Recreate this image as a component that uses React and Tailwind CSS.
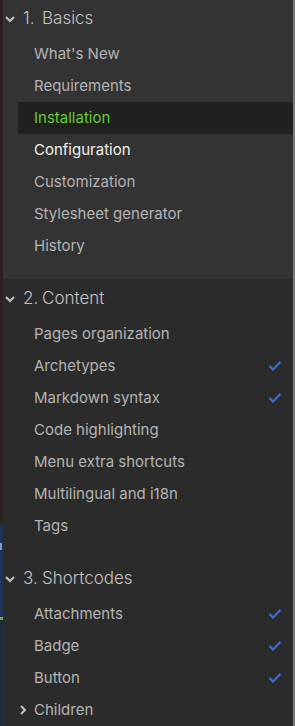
import React from 'react';

const sections = [
  {
    num: '1.',
    title: 'Basics',
    bg: 'bg-[#333333]',
    items: [
      { label: "What's New" },
      { label: 'Requirements' },
      { label: 'Installation', active: true },
      { label: 'Configuration', parent: true },
      { label: 'Customization' },
      { label: 'Stylesheet generator' },
      { label: 'History' },
    ],
  },
  {
    num: '2.',
    title: 'Content',
    bg: 'bg-[#2b2b2b]',
    items: [
      { label: 'Pages organization' },
      { label: 'Archetypes', visited: true },
      { label: 'Markdown syntax', visited: true },
      { label: 'Code highlighting' },
      { label: 'Menu extra shortcuts' },
      { label: 'Multilingual and i18n' },
      { label: 'Tags' },
    ],
  },
  {
    num: '3.',
    title: 'Shortcodes',
    bg: 'bg-[#2b2b2b]',
    items: [
      { label: 'Attachments', visited: true },
      { label: 'Badge', visited: true },
      { label: 'Button', visited: true },
      { label: 'Children', collapsed: true },
    ],
  },
];

const ChevronDown = () => (
  <svg width="10" height="10" viewBox="0 0 10 10" className="text-[#c4c4c4]">
    <path d="M1 3 L5 7 L9 3" fill="none" stroke="currentColor" strokeWidth="2" />
  </svg>
);

const ChevronRight = () => (
  <svg width="10" height="10" viewBox="0 0 10 10" className="text-[#c4c4c4]">
    <path d="M3 1 L7 5 L3 9" fill="none" stroke="currentColor" strokeWidth="2" />
  </svg>
);

const Check = () => (
  <svg width="14" height="12" viewBox="0 0 14 12" className="text-[#3d6fd1]">
    <path d="M1.5 6 L5 9.5 L12.5 2" fill="none" stroke="currentColor" strokeWidth="2.2" />
  </svg>
);

function Section({ section }) {
  return (
    <div className={`${section.bg} pb-[17px]`}>
      <div className="h-[39px] flex items-center pl-[2px] text-[17px] text-[#c4c4c4] font-light">
        <ChevronDown />
        <span className="ml-[8px] w-[19px]">{section.num}</span>
        <span>{section.title}</span>
      </div>
      <ul>
        {section.items.map((item) => (
          <li
            key={item.label}
            className={`h-[32px] ml-[15px] flex items-center pr-[11px] text-[15px] ${
              item.active
                ? 'bg-[#202020] text-[#62cc32]'
                : item.parent
                ? 'text-[#f2f2f2]'
                : 'text-[#b4b4b4]'
            }`}
          >
            <span className="w-[16px] flex items-center">
              {item.collapsed && <ChevronRight />}
            </span>
            <span className="flex-1 whitespace-nowrap overflow-hidden">{item.label}</span>
            {item.visited && <Check />}
          </li>
        ))}
      </ul>
    </div>
  );
}

export default function App() {
  return (
    <div
      className="w-[295px] h-[726px] overflow-hidden flex bg-[#2b2b2b]"
      style={{ fontFamily: 'Inter, "Open Sans", sans-serif' }}
    >
      <div className="w-[3px] flex flex-col shrink-0">
        <div className="h-[525px] bg-[#2a2121]" />
        <div className="h-[92px] bg-[#1d3458] flex flex-col">
          <div className="h-[18px]" />
          <div className="h-[7px] w-[2px] bg-[#8a9bb5]" />
        </div>
        <div className="h-[3px] bg-[#7fa33a]" />
        <div className="flex-1 bg-[#1d2a3d]" />
      </div>
      <nav className="flex-1 -mt-[1px] overflow-hidden">
        {sections.map((s) => (
          <Section key={s.title} section={s} />
        ))}
      </nav>
      <div className="w-[2px] bg-[#7a7a7a] shrink-0" />
    </div>
  );
}
